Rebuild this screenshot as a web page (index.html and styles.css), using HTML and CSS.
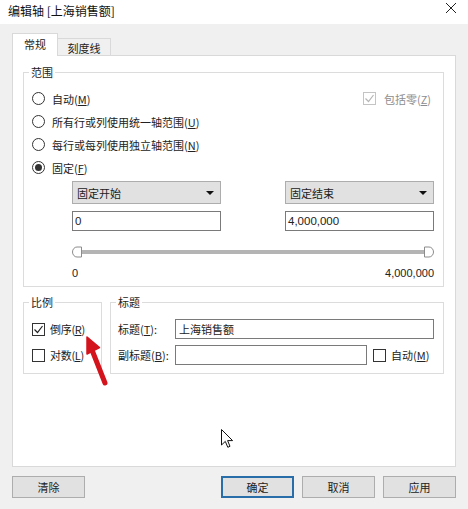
FILE: index.html
```html
<!DOCTYPE html>
<html lang="zh">
<head>
<meta charset="utf-8">
<title>编辑轴</title>
<link rel="stylesheet" href="styles.css">
</head>
<body>
<div class="window">
  <div class="titlebar">
    <span class="title">编辑轴 [上海销售额]</span>
    <svg class="close" width="12" height="12" viewBox="0 0 12 12"><path d="M1 1 L11 11 M11 1 L1 11" stroke="#222" stroke-width="1" fill="none"/></svg>
  </div>
  <div class="content">
    <div class="tabs">
      <div class="tab active">常规</div>
      <div class="tab">刻度线</div>
    </div>
    <div class="panel">
      <fieldset class="group">
        <legend>范围</legend>
        <div class="range-body">
          <div class="row between">
            <label class="opt"><span class="radio"></span>自动(<u>M</u>)</label>
            <label class="opt disabled"><span class="check dis"><svg width="11" height="11" viewBox="0 0 11 11"><path d="M1.5 5.5 L4.5 8.5 L9.5 2" stroke="#b5b5b5" stroke-width="1.2" fill="none"/></svg></span>包括零(<u>Z</u>)</label>
          </div>
          <div class="row"><label class="opt"><span class="radio"></span>所有行或列使用统一轴范围(<u>U</u>)</label></div>
          <div class="row"><label class="opt"><span class="radio"></span>每行或每列使用独立轴范围(<u>N</u>)</label></div>
          <div class="row"><label class="opt"><span class="radio on"></span>固定(<u>F</u>)</label></div>
          <div class="sub">
            <div class="pair">
              <div class="select">固定开始<span class="caret"></span></div>
              <div class="select">固定结束<span class="caret"></span></div>
            </div>
            <div class="pair inputs">
              <div class="input num">0</div>
              <div class="input num">4,000,000</div>
            </div>
            <div class="slider">
              <svg class="thumb" width="10" height="12" viewBox="0 0 10 12"><path d="M9.5 1 H5 A4.5 5 0 0 0 5 11 H9.5 Z" fill="#fff" stroke="#8c8c8c"/></svg>
              <div class="track"></div>
              <svg class="thumb" width="10" height="12" viewBox="0 0 10 12"><path d="M0.5 1 H5 A4.5 5 0 0 1 5 11 H0.5 Z" fill="#fff" stroke="#8c8c8c"/></svg>
            </div>
            <div class="scale"><span>0</span><span>4,000,000</span></div>
          </div>
        </div>
      </fieldset>
      <div class="bottom">
        <fieldset class="group ratio">
          <legend>比例</legend>
          <div class="ratio-body">
            <div class="row2"><label class="opt"><span class="check"><svg width="11" height="11" viewBox="0 0 11 11"><path d="M1.5 5.5 L4.5 8.5 L9.5 2" stroke="#222" stroke-width="1.2" fill="none"/></svg></span>倒序(<u>R</u>)</label></div>
            <div class="row2"><label class="opt"><span class="check"></span>对数(<u>L</u>)</label></div>
          </div>
        </fieldset>
        <fieldset class="group titles">
          <legend>标题</legend>
          <div class="titles-body">
            <div class="row2">
              <span class="lbl">标题(<u>T</u>):</span>
              <div class="input grow">上海销售额</div>
            </div>
            <div class="row2">
              <span class="lbl">副标题(<u>B</u>):</span>
              <div class="input sub-in"></div>
              <label class="opt auto"><span class="check"></span>自动(<u>M</u>)</label>
            </div>
          </div>
        </fieldset>
      </div>
    </div>
    <div class="buttons">
      <button class="btn">清除</button>
      <div class="right-btns">
        <button class="btn default">确定</button>
        <button class="btn">取消</button>
        <button class="btn">应用</button>
      </div>
    </div>
  </div>
  <svg class="red-arrow" width="40" height="60" viewBox="76 332 40 60">
    <line x1="92" y1="350" x2="105" y2="383" stroke="#d3141c" stroke-width="5" stroke-linecap="round"/>
    <polygon points="87,337 87,354 99.5,347.5" fill="#d3141c" stroke="#d3141c" stroke-width="1.5" stroke-linejoin="round"/>
  </svg>
  <svg class="cursor" width="13" height="20" viewBox="0 0 13 20"><path d="M0.5 0.5 L0.5 16 L4.3 12.4 L6.8 18.3 L9 17.3 L6.6 11.6 L11.6 11.6 Z" fill="#fff" stroke="#111" stroke-width="1" stroke-linejoin="round"/></svg>
</div>
</body>
</html>
```

FILE: styles.css
```css
* { box-sizing: border-box; }
html, body { margin: 0; padding: 0; }
body {
  width: 468px;
  height: 509px;
  background: #f0f0f0;
  font-family: "Noto Sans CJK SC", "Microsoft YaHei", sans-serif;
  font-size: 11px;
  color: #222;
  overflow: hidden;
}
u { text-decoration: underline; text-underline-offset: 1px; }
.window { position: relative; width: 468px; height: 509px; }
.titlebar {
  height: 24px;
  background: #fff;
  display: flex;
  align-items: center;
  justify-content: space-between;
  padding: 0 11px 2px 8px;
}
.title { font-size: 12px; line-height: 16px; color: #111; }
.close { margin-top: -6px; }
.content { padding: 9px 12px 0 12px; }
.tabs { display: flex; align-items: flex-end; height: 22px; }
.tab {
  height: 17px;
  width: 53px;
  border: 1px solid #d9d9d9;
  border-bottom: none;
  border-left: none;
  background: #f0f0f0;
  display: flex;
  align-items: center;
  justify-content: center;
  line-height: 14px;
  padding-top: 1px;
}
.tab.active {
  height: 23px;
  width: 46px;
  border-left: 1px solid #d9d9d9;
  background: #fff;
  position: relative;
  z-index: 1;
  margin-bottom: -1px;
  padding-top: 0;
  padding-bottom: 2px;
}
.panel {
  height: 412px;
  background: #fff;
  border: 1px solid #d9d9d9;
  padding: 8px 11px 0 10px;
}
.group {
  margin: 0;
  padding: 0;
  border: 1px solid #dcdcdc;
  min-width: 0;
}
.group legend {
  margin-left: 5px;
  padding: 0 2px;
  line-height: 16px;
  height: 16px;
}
.range-body { padding: 7px 9px 6px 8px; }
.row { height: 23px; display: flex; align-items: center; }
.between { justify-content: space-between; }
.opt { display: flex; align-items: center; line-height: 14px; white-space: nowrap; }
.opt.disabled { color: #8d8d8d; margin-right: 3px; }
.radio {
  width: 13px; height: 13px;
  border: 1px solid #333;
  border-radius: 50%;
  background: #fff;
  margin-right: 7px;
  display: flex; align-items: center; justify-content: center;
}
.radio.on::after {
  content: "";
  width: 7px; height: 7px;
  border-radius: 50%;
  background: #333;
}
.check {
  width: 13px; height: 13px;
  border: 1px solid #333;
  background: #fff;
  margin-right: 5px;
  display: flex; align-items: center; justify-content: center;
}
.check.dis { border-color: #c4c4c4; margin-right: 8px; }
.sub { margin-left: 40px; padding-top: 2px; }
.pair { display: grid; grid-template-columns: 149px 149px; justify-content: space-between; }
.select {
  height: 23px;
  background: #e1e1e1;
  border: 1px solid #adadad;
  display: flex; align-items: center; justify-content: space-between;
  padding: 0 6px 0 4px;
  line-height: 14px;
}
.caret {
  width: 0; height: 0;
  border-left: 4px solid transparent;
  border-right: 4px solid transparent;
  border-top: 4px solid #111;
}
.inputs { margin-top: 7px; }
.input {
  height: 20px;
  border: 1px solid #7a7a7a;
  background: #fff;
  padding-left: 3px;
  display: flex; align-items: center;
  line-height: 14px;
}
.input.num { font-family: "Liberation Sans", Arial, sans-serif; font-size: 11.5px; padding-left: 2px; }
.input.grow { flex: 1; }
.input.sub-in { width: 192px; }
.slider { margin-top: 15px; height: 12px; display: flex; align-items: center; }
.thumb { flex: none; display: block; }
.track { flex: 1; height: 4px; background: #b4b4b4; }
.scale {
  margin-top: 8px;
  display: flex; justify-content: space-between;
  line-height: 14px;
  font-family: "Liberation Sans", Arial, sans-serif;
  font-size: 11px;
}
.bottom { display: flex; gap: 8px; margin-top: 7px; }
.ratio { width: 79px; flex: none; }
.titles { flex: 1; }
.ratio-body { padding: 6px 0 5px 8px; }
.ratio-body .opt { letter-spacing: -0.3px; }
.titles-body { padding: 6px 9px 5px 7px; }
.row2 { height: 26px; display: flex; align-items: center; }
.lbl { width: 57px; flex: none; line-height: 14px; }
.auto { margin-left: 6px; }
.buttons { display: flex; justify-content: space-between; margin-top: 9px; }
.right-btns { display: flex; gap: 8px; }
.btn {
  width: 73px; height: 22px;
  background: #e1e1e1;
  border: 1px solid #adadad;
  font-family: "Noto Sans CJK SC", sans-serif;
  font-size: 11px;
  color: #222;
  padding: 0;
  line-height: 14px;
  margin: 0;
}
.btn.default { border: 2px solid #2a6ea9; }
.red-arrow { position: absolute; left: 76px; top: 332px; }
.cursor { position: absolute; left: 221px; top: 429px; }
```
